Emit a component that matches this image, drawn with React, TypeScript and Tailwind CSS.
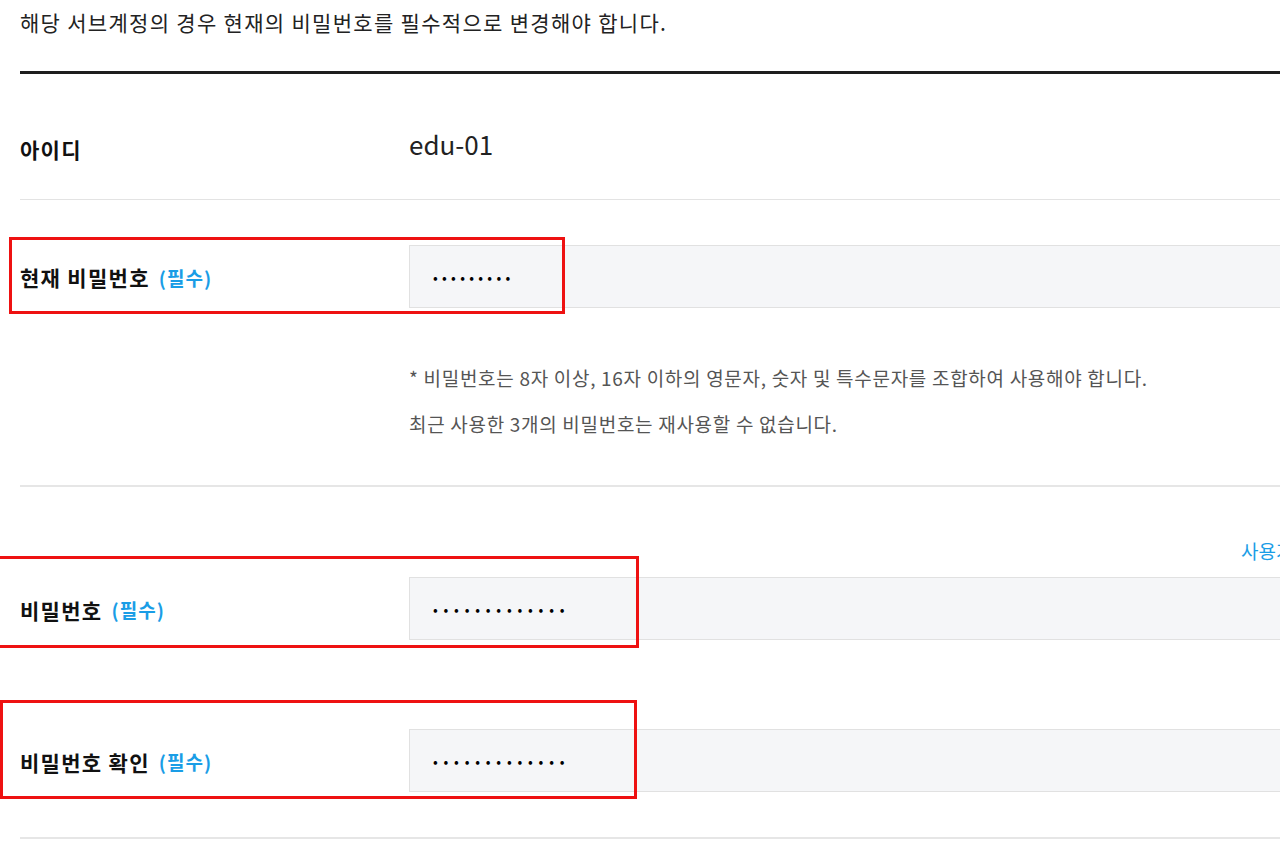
const FONT = "font-['Malgun_Gothic','Noto_Sans_CJK_KR','Noto_Sans',sans-serif]";

const Required = () => (
  <span className="ml-[9px] text-[19px] font-bold tracking-[1px] text-[#1a9de6]">(필수)</span>
);

const PasswordInput = ({ value, tracking }: { value: string; tracking: string }) => (
  <input
    type="password"
    readOnly
    value={value}
    className={`h-[63px] w-[1000px] shrink-0 border border-[#e1e1e1] bg-[#f5f6f8] pl-[23px] text-[14px] text-black outline-none ${tracking}`}
  />
);

export default function App() {
  return (
    <div className={`relative h-[842px] w-full overflow-hidden bg-white text-[#111] ${FONT}`}>
      <div className="w-[1400px] pl-5">
        <p className="pt-[6px] text-[21px] leading-[32px] tracking-[1.3px] text-[#222]">
          해당 서브계정의 경우 현재의 비밀번호를 필수적으로 변경해야 합니다.
        </p>
        <div className="mt-[33px] h-[3px] bg-[#1e1e1e]" />

        <div className="flex h-[126px] items-start border-b border-[#e3e3e3] pt-[55px]">
          <div className="mt-[5px] w-[389px] shrink-0 text-[21px] font-bold leading-[30px] tracking-[1.3px]">
            아이디
          </div>
          <div className="text-[26px] leading-[30px] text-[#222]">edu-01</div>
        </div>

        <div className="border-b-2 border-[#e6e6e6] pt-[45px] pb-[38px]">
          <div className="flex items-center">
            <div className="flex w-[389px] shrink-0 items-center pt-[3px] text-[21px] font-bold tracking-[1.3px]">
              현재 비밀번호
              <Required />
            </div>
            <PasswordInput value="123456789" tracking="tracking-[4.3px]" />
          </div>
          <div className="ml-[389px] mt-[47px] text-[19px] leading-[46px] tracking-[0.7px] text-[#555]">
            <p>* 비밀번호는 8자 이상, 16자 이하의 영문자, 숫자 및 특수문자를 조합하여 사용해야 합니다.</p>
            <p>최근 사용한 3개의 비밀번호는 재사용할 수 없습니다.</p>
          </div>
        </div>

        <div className="border-b-2 border-[#e6e6e6] pt-[52px] pb-[45px]">
          <div className="ml-[389px] pl-[832px] text-[19px] leading-[24px] whitespace-nowrap text-[#1a9de6]">
            사용가능한 비밀번호입니다.
          </div>
          <div className="mt-[14px] flex items-center">
            <div className="flex w-[389px] shrink-0 items-center pt-[4px] text-[21px] font-bold tracking-[1.3px]">
              비밀번호
              <Required />
            </div>
            <PasswordInput value="1234567890123" tracking="tracking-[5.8px]" />
          </div>
          <div className="mt-[89px] flex items-center">
            <div className="flex w-[389px] shrink-0 items-center pt-[4px] text-[21px] font-bold tracking-[1.3px]">
              비밀번호 확인
              <Required />
            </div>
            <PasswordInput value="1234567890123" tracking="tracking-[5.8px]" />
          </div>
        </div>
      </div>

      {/* annotation boxes */}
      <div className="pointer-events-none absolute top-[237px] left-[9px] h-[77px] w-[556px] border-[3px] border-[#ee1111]" />
      <div className="pointer-events-none absolute top-[556px] left-[-4px] h-[92px] w-[643px] border-[3px] border-[#ee1111]" />
      <div className="pointer-events-none absolute top-[700px] left-0 h-[99px] w-[637px] border-[3px] border-[#ee1111]" />
    </div>
  );
}
